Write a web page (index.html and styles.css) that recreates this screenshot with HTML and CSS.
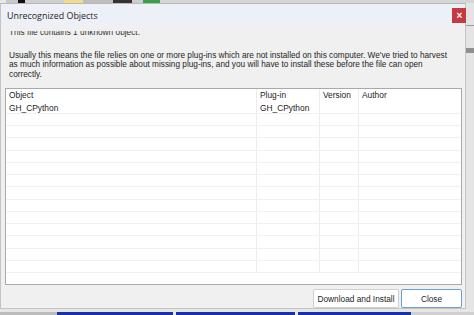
FILE: index.html
```html
<!DOCTYPE html>
<html>
<head>
<meta charset="utf-8">
<link rel="stylesheet" href="styles.css">
</head>
<body>
<div class="top">
  <span class="blk b1"></span><span class="blk b2"></span><span class="blk b3"></span><span class="blk b4"></span><span class="blk b5"></span><span class="blk b6"></span><span class="blk b7"></span><span class="blk b8"></span><span class="blk b9"></span>
</div>
<div class="main">
  <div class="dialog">
    <div class="titlebar">
      <span class="title">Unrecognized Objects</span>
      <span class="close-x">&#215;</span>
    </div>
    <div class="body">
      <div class="clip"><div class="count">This file contains 1 unknown object.</div></div>
      <p class="info">Usually this means the file relies on one or more plug-ins which are not installed on this computer. We've tried to harvest<br>as much information as possible about missing plug-ins, and you will have to install these before the file can open<br>correctly.</p>
      <div class="list">
        <div class="row head">
          <div class="c c1">Object</div><div class="c c2">Plug-in</div><div class="c c3">Version</div><div class="c c4">Author</div>
        </div>
        <div class="row first">
          <div class="c c1">GH_CPython</div><div class="c c2">GH_CPython</div><div class="c c3"></div><div class="c c4"></div>
        </div>
        <div class="row"><div class="c c1"></div><div class="c c2"></div><div class="c c3"></div><div class="c c4"></div></div>
        <div class="row"><div class="c c1"></div><div class="c c2"></div><div class="c c3"></div><div class="c c4"></div></div>
        <div class="row"><div class="c c1"></div><div class="c c2"></div><div class="c c3"></div><div class="c c4"></div></div>
        <div class="row"><div class="c c1"></div><div class="c c2"></div><div class="c c3"></div><div class="c c4"></div></div>
        <div class="row"><div class="c c1"></div><div class="c c2"></div><div class="c c3"></div><div class="c c4"></div></div>
        <div class="row"><div class="c c1"></div><div class="c c2"></div><div class="c c3"></div><div class="c c4"></div></div>
        <div class="row"><div class="c c1"></div><div class="c c2"></div><div class="c c3"></div><div class="c c4"></div></div>
        <div class="row"><div class="c c1"></div><div class="c c2"></div><div class="c c3"></div><div class="c c4"></div></div>
        <div class="row"><div class="c c1"></div><div class="c c2"></div><div class="c c3"></div><div class="c c4"></div></div>
        <div class="row"><div class="c c1"></div><div class="c c2"></div><div class="c c3"></div><div class="c c4"></div></div>
        <div class="row"><div class="c c1"></div><div class="c c2"></div><div class="c c3"></div><div class="c c4"></div></div>
        <div class="row"><div class="c c1"></div><div class="c c2"></div><div class="c c3"></div><div class="c c4"></div></div>
        <div class="row last"><div class="c c1"></div><div class="c c2"></div><div class="c c3"></div><div class="c c4"></div></div>
      </div>
      <div class="buttons">
        <button class="btn">Download and Install</button>
        <button class="btn primary">Close</button>
      </div>
    </div>
  </div>
  <div class="side"><div class="side-line"></div><div class="side-mark"></div></div>
</div>
<div class="taskbar">
  <span class="tb grey"></span><span class="tb blue w1"></span><span class="tb gap"></span><span class="tb blue w2"></span><span class="tb gap"></span><span class="tb blue w3"></span><span class="tb grey2"></span>
</div>
</body>
</html>
```

FILE: styles.css
```css
html, body {
  margin: 0;
  padding: 0;
}
body {
  width: 474px;
  height: 315px;
  overflow: hidden;
  background: #dcdcdc;
  font-family: "Liberation Sans", Arial, sans-serif;
  color: #1a1a1a;
}
.top {
  display: flex;
  height: 3px;
  background: #d6d6d6;
}
.blk { display: block; height: 3px; }
.b1 { width: 6px; background: #e8e8e8; }
.b2 { width: 12px; background: #c8c8c8; }
.b3 { width: 7px; background: #111; }
.b4 { width: 39px; background: #cfcfcf; }
.b5 { width: 19px; background: #f2dc8c; }
.b6 { width: 30px; background: #bdbdbd; }
.b7 { width: 19px; background: #333; }
.b8 { width: 11px; background: #cfcfcf; }
.b9 { width: 17px; background: #3aa04a; }

.main {
  display: flex;
  height: 306px;
}
.dialog {
  width: 466px;
  display: flex;
  flex-direction: column;
  background: #f0f0f0;
  border: 1px solid #c4c4c4;
  border-top-color: #b8b8b8;
  box-sizing: border-box;
}
.titlebar {
  height: 22px;
  flex: none;
  display: flex;
  align-items: center;
  background: #eef0f8;
  padding: 0 0 0 6px;
}
.title {
  font-family: "Open Sans", "Noto Sans", sans-serif;
  font-size: 8.9px;
  color: #1e1e1e;
}
.close-x {
  margin-left: auto;
  margin-right: -2px;
  width: 15px;
  height: 15px;
  background: #c8393f;
  color: #fff;
  font-size: 10px;
  font-weight: bold;
  line-height: 15px;
  text-align: center;
}
.body {
  flex: 1;
  display: flex;
  flex-direction: column;
  padding: 0 2px 0 4px;
}
.clip {
  margin-top: 5px;
  height: 7px;
  overflow: hidden;
}
.count {
  margin-top: -4px;
  padding-left: 4px;
  font-size: 8.3px;
  line-height: 11px;
  color: #333;
}
.info {
  margin: 13px 0 0 0;
  padding-left: 4px;
  font-size: 8.25px;
  line-height: 9.4px;
  color: #1e1e1e;
  height: 33px;
  white-space: nowrap;
}
.list {
  margin-top: 4px;
  height: 197px;
  box-sizing: border-box;
  background: #fff;
  border: 1px solid #a9a9a9;
  overflow: hidden;
  margin-right: 1px;
}
.row {
  display: flex;
  height: 12.25px;
  border-bottom: 1px solid #f1f1f1;
  box-sizing: border-box;
}
.row.head { border-bottom: none; height: 12.5px; }
.c {
  font-size: 8.4px;
  line-height: 12px;
  padding-left: 3px;
  box-sizing: border-box;
  color: #1e1e1e;
  white-space: nowrap;
}
.c1 { width: 251px; border-right: 1px solid #ececec; }
.c2 { width: 63px; border-right: 1px solid #ececec; }
.c3 { width: 39px; border-right: 1px solid #ececec; }
.c4 { flex: 1; }
.buttons {
  display: flex;
  justify-content: flex-end;
  gap: 2px;
  margin-top: 4px;
  margin-right: 1px;
}
.btn {
  height: 19px;
  padding: 0;
  background: #fff;
  border: 1px solid #d0d0d0;
  border-radius: 2px;
  font-family: "Liberation Sans", Arial, sans-serif;
  font-size: 8.3px;
  color: #1e1e1e;
}
.btn:first-child { width: 86px; }
.btn.primary {
  width: 61px;
  border-color: #6a9fd8;
}
.side {
  flex: 1;
  background: #e4e4e4;
  display: flex;
  flex-direction: column;
}
.side-line {
  margin-top: 22px;
  height: 1px;
  background: #9a9a9a;
}
.side-mark {
  margin-top: 22px;
  height: 5px;
  background: #8f8f8f;
}
.taskbar {
  display: flex;
  height: 6px;
  align-items: flex-end;
  background: #e6e6e6;
}
.tb { display: block; height: 3px; }
.tb.grey { width: 57px; background: #bcbcbc; }
.tb.blue { background: #1731a8; }
.tb.w1 { width: 116px; }
.tb.w2 { width: 119px; }
.tb.w3 { width: 113px; }
.tb.gap { width: 3px; background: #e8ecf4; }
.tb.grey2 { flex: 1; background: #d0d0d0; }
```
